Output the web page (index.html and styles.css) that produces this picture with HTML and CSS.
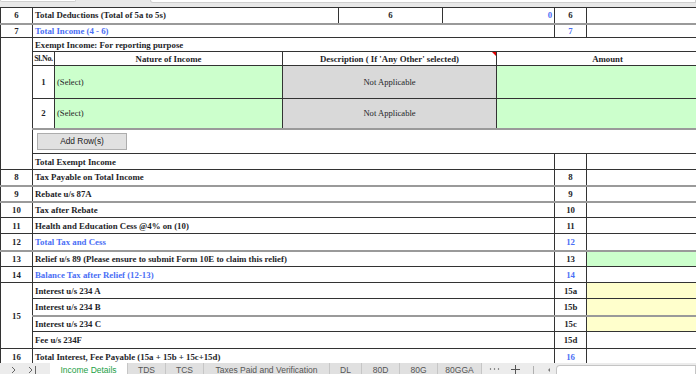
FILE: index.html
```html
<!DOCTYPE html>
<html>
<head>
<meta charset="utf-8">
<link rel="stylesheet" href="styles.css">
</head>
<body>
<div class="app">
  <div class="topstrip"><div class="tb tb1"></div><div class="tb tb2"></div></div>
  <div class="sheet">
    <table class="grid">
      <colgroup>
        <col class="w32"><col class="w22"><col class="w228"><col class="w56"><col class="w104"><col class="w54"><col class="w58"><col class="w32"><col class="w110">
      </colgroup>
      <tr class="h16">
        <td class="n">6</td><td colspan="3" class="lbl">Total Deductions (Total of 5a to 5s)</td><td class="c">6</td><td colspan="2" class="r blue">0</td><td class="c">6</td><td></td>
      </tr>
      <tr class="h14 gb">
        <td class="n">7</td><td colspan="6" class="lbl blue">Total Income (4 - 6)</td><td class="c blue">7</td><td></td>
      </tr>
      <tr class="h14">
        <td rowspan="6" class="n"></td><td colspan="8" class="lbl">Exempt Income: For reporting purpose</td>
      </tr>
      <tr class="h14">
        <td class="c sl">Sl.No.</td><td class="c">Nature of Income</td><td colspan="3" class="c desc">Description ( If 'Any Other' selected)<span class="tri"></span></td><td colspan="3" class="c amt">Amount</td>
      </tr>
      <tr class="h33">
        <td class="c">1</td><td class="green norm">(Select)</td><td colspan="3" class="gray c norm">Not Applicable</td><td colspan="3" class="green"></td>
      </tr>
      <tr class="h30">
        <td class="c">2</td><td class="green norm">(Select)</td><td colspan="3" class="gray c norm">Not Applicable</td><td colspan="3" class="green"></td>
      </tr>
      <tr class="h25 gb">
        <td colspan="8" class="btncell"><button class="addrow">Add Row(s)</button></td>
      </tr>
      <tr class="h16">
        <td colspan="6" class="lbl">Total Exempt Income</td><td></td><td></td>
      </tr>
      <tr class="h16">
        <td class="n">8</td><td colspan="6" class="lbl">Tax Payable on Total Income</td><td class="c">8</td><td></td>
      </tr>
      <tr class="h16 gb">
        <td class="n">9</td><td colspan="6" class="lbl">Rebate u/s 87A</td><td class="c">9</td><td></td>
      </tr>
      <tr class="h16 gb">
        <td class="n">10</td><td colspan="6" class="lbl">Tax after Rebate</td><td class="c">10</td><td></td>
      </tr>
      <tr class="h16">
        <td class="n">11</td><td colspan="6" class="lbl">Health and Education Cess @4% on (10)</td><td class="c">11</td><td></td>
      </tr>
      <tr class="h17">
        <td class="n">12</td><td colspan="6" class="lbl blue">Total Tax and Cess</td><td class="c blue">12</td><td></td>
      </tr>
      <tr class="h16 gb">
        <td class="n">13</td><td colspan="6" class="lbl">Relief u/s 89 (Please ensure to submit Form 10E to claim this relief)</td><td class="c">13</td><td class="green"></td>
      </tr>
      <tr class="h16">
        <td class="n">14</td><td colspan="6" class="lbl blue">Balance Tax after Relief (12-13)</td><td class="c blue">14</td><td></td>
      </tr>
      <tr class="h16">
        <td rowspan="4" class="n">15</td><td colspan="6" class="lbl">Interest u/s 234 A</td><td class="c">15a</td><td class="yellow"></td>
      </tr>
      <tr class="h17">
        <td colspan="6" class="lbl">Interest u/s 234 B</td><td class="c">15b</td><td class="yellow"></td>
      </tr>
      <tr class="h16 gb">
        <td colspan="6" class="lbl">Interest u/s 234 C</td><td class="c">15c</td><td class="yellow"></td>
      </tr>
      <tr class="h17">
        <td colspan="6" class="lbl">Fee u/s 234F</td><td class="c">15d</td><td></td>
      </tr>
      <tr class="h16">
        <td class="n">16</td><td colspan="6" class="lbl">Total Interest, Fee Payable (15a + 15b + 15c+15d)</td><td class="c blue">16</td><td></td>
      </tr>
    </table>
  </div>
  <div class="tabbar">
    <div class="nav">
      <svg width="50" height="11" viewBox="0 0 50 11"><polyline points="12,4 15,7 12,10" fill="none" stroke="#666" stroke-width="1"/><polyline points="29,4 32,7 29,10" fill="none" stroke="#666" stroke-width="1"/><line x1="35.5" y1="3" x2="35.5" y2="11" stroke="#666" stroke-width="1"/></svg>
    </div>
    <div class="tab active">Income Details</div>
    <div class="tab t38">TDS</div>
    <div class="tab t38">TCS</div>
    <div class="tab t126">Taxes Paid and Verification</div>
    <div class="tab t32">DL</div>
    <div class="tab t38">80D</div>
    <div class="tab t38">80G</div>
    <div class="tab t44">80GGA</div>
    <div class="more">
      <svg width="26" height="11" viewBox="0 0 26 11"><circle cx="8.5" cy="6" r="0.7" fill="#555"/><circle cx="12.5" cy="6" r="0.7" fill="#555"/><circle cx="16.5" cy="6" r="0.7" fill="#555"/></svg>
    </div>
    <div class="plus">
      <svg width="16" height="11" viewBox="0 0 16 11"><line x1="3" y1="6.5" x2="12" y2="6.5" stroke="#555" stroke-width="1"/><line x1="7.5" y1="2" x2="7.5" y2="11" stroke="#555" stroke-width="1"/></svg>
    </div>
    <div class="divider"></div>
    <div class="scrl">
      <svg width="12" height="11" viewBox="0 0 12 11"><polygon points="6,5 4,7 6,9" fill="#777"/></svg>
    </div>
    <div class="hscroll"></div>
  </div>
</div>
</body>
</html>
```
FILE: styles.css
```css
html, body {
  margin: 0;
  padding: 0;
  background: #fff;
}
body {
  width: 696px;
  height: 374px;
  overflow: hidden;
  font-family: "Liberation Serif", "Times New Roman", serif;
}
.app {
  display: flex;
  flex-direction: column;
  height: 374px;
}
.topstrip {
  height: 7px;
  flex: none;
  background: #e8e8e8;
  display: flex;
  align-items: flex-start;
}
.tb {
  background: #fff;
  border: 1px solid #cfcfcf;
  border-top: none;
}
.tb1 {
  width: 74px;
  height: 1px;
  border-radius: 0 0 3px 3px;
}
.tb2 {
  margin-left: 74px;
  flex: 1;
  height: 2px;
  border-radius: 0 0 0 3px;
}
.sheet {
  flex: 1;
  overflow: hidden;
}
.grid {
  border-collapse: collapse;
  table-layout: fixed;
  width: 696px;
}
.w32 { width: 32px; }
.w22 { width: 22px; }
.w228 { width: 228px; }
.w56 { width: 56px; }
.w104 { width: 104px; }
.w54 { width: 54px; }
.w58 { width: 58px; }
.w110 { width: 110px; }
.grid td {
  border: 1px solid #333;
  padding: 0 2px;
  font-size: 8.8px;
  font-weight: bold;
  color: #1e1e28;
  white-space: nowrap;
  overflow: hidden;
  line-height: 10px;
  vertical-align: middle;
}
.h14 { height: 14px; }
.h16 { height: 16px; }
.h17 { height: 17px; }
.h25 { height: 25px; }
.h30 { height: 30px; }
.h33 { height: 33px; }
.gb td { border-top: 2px solid #9a9a9a; }
.grid td.n { text-align: center; }
.grid td.c { text-align: center; }
.grid td.r { text-align: right; }
.grid td.lbl { padding-left: 2px; }
.grid td.sl {
  padding: 0;
  font-size: 8px;
  letter-spacing: -0.3px;
}
.grid td.amt { padding-left: 24px; }
.grid td.blue { color: #4a6ef5; }
.grid td.norm { font-weight: normal; font-size: 8.6px; }
.grid td.green { background: #ccffcc; }
.grid td.gray { background: #d9d9d9; }
.grid td.yellow { background: #ffffcc; }
.grid td.desc { position: relative; overflow: visible; }
.tri {
  position: absolute;
  top: 0;
  right: 0;
  width: 0;
  height: 0;
  border-top: 4px solid #e00000;
  border-left: 4px solid transparent;
}
.grid td.btncell {
  padding: 0 0 0 4px;
}
.addrow {
  display: block;
  width: 90px;
  height: 17px;
  margin: 0;
  padding: 0;
  background: #e1e1e1;
  border: 1px solid #adadad;
  font-family: "Liberation Sans", Arial, sans-serif;
  font-size: 8.4px;
  color: #222;
  line-height: 15px;
}
.tabbar {
  height: 11px;
  flex: none;
  display: flex;
  align-items: stretch;
  background: #ececec;
  overflow: hidden;
  font-family: "Liberation Sans", Arial, sans-serif;
  font-size: 8.5px;
  color: #555;
  line-height: 10px;
}
.tabbar svg { display: block; }
.nav {
  width: 50px;
  flex: none;
}
.tab {
  flex: none;
  padding-top: 2px;
  text-align: center;
  background: #e0e0e0;
  border-right: 1px solid #c6c6c6;
  box-sizing: border-box;
  white-space: nowrap;
  overflow: hidden;
}
.tab.active {
  width: 78px;
  background: #fff;
  color: #21a045;
}
.t32 { width: 32px; }
.t38 { width: 38px; }
.t44 { width: 44px; }
.t126 { width: 126px; }
.more {
  width: 26px;
  flex: none;
}
.plus {
  width: 16px;
  flex: none;
}
.divider {
  width: 1px;
  flex: none;
  margin: 3px 10px 0 9px;
  background: #b0b0b0;
}
.scrl {
  width: 12px;
  flex: none;
}
.hscroll {
  flex: 1;
  margin-top: 2px;
  background: #fff;
  border: 1px solid #c4c4c4;
  border-bottom: none;
  border-radius: 4px 0 0 0;
}
```
